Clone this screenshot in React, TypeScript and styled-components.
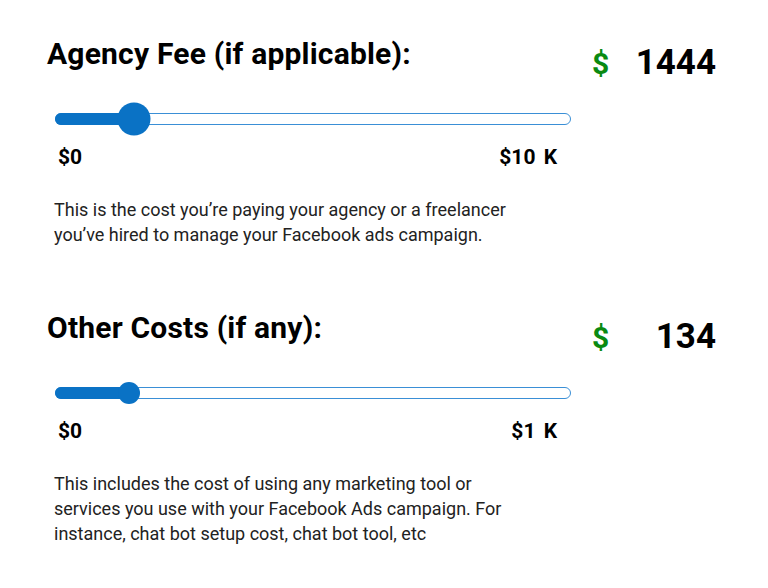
import React from "react";
import styled, { createGlobalStyle } from "styled-components";

const GlobalStyle = createGlobalStyle`
  html, body {
    margin: 0;
    padding: 0;
    background: #ffffff;
  }
  body {
    font-family: Roboto, "Liberation Sans", Arial, sans-serif;
    color: #000000;
  }
`;

const blue = "#0a72c5";

interface CostItem {
  title: string;
  value: number;
  max: number;
  maxLabel: string;
  bigThumb?: boolean;
  text: string;
}

const items: CostItem[] = [
  {
    title: "Agency Fee (if applicable):",
    value: 1444,
    max: 10000,
    maxLabel: "$10 K",
    bigThumb: true,
    text: "This is the cost you’re paying your agency or a freelancer you’ve hired to manage your Facebook ads campaign.",
  },
  {
    title: "Other Costs (if any):",
    value: 134,
    max: 1000,
    maxLabel: "$1 K",
    text: "This includes the cost of using any marketing tool or services you use with your Facebook Ads campaign. For instance, chat bot setup cost, chat bot tool, etc",
  },
];

const Slider = ({ value, max, big }: { value: number; max: number; big?: boolean }) => {
  const pct = value / max;
  // thumb centre travels between 6px insets of the track
  const pos = `calc(6px + ${pct} * (100% - 12px))`;
  return (
    <SliderWrap>
      <Track>
        <Fill style={{ width: pos }} />
        <Thumb big={big} style={{ left: pos }} />
      </Track>
    </SliderWrap>
  );
};

export default function App() {
  return (
    <>
      <GlobalStyle />
      <Page>
        {items.map((item) => (
          <Section key={item.title}>
            <Main>
              <Title>{item.title}</Title>
              <Slider value={item.value} max={item.max} big={item.bigThumb} />
              <Range>
                <span>$0</span>
                <span>{item.maxLabel}</span>
              </Range>
              <Note>{item.text}</Note>
            </Main>
            <Amount>
              <Dollar>$</Dollar>
              <span>{item.value}</span>
            </Amount>
          </Section>
        ))}
      </Page>
    </>
  );
}

const Page = styled.div`
  width: 768px;
  height: 588px;
  box-sizing: border-box;
  padding: 37px 0 0 47px;
  display: flex;
  flex-direction: column;
  gap: 64px;
`;

const Section = styled.section`
  display: flex;
  align-items: flex-start;
  gap: 21px;
`;

const Main = styled.div`
  width: 524px;
  display: flex;
  flex-direction: column;
`;

const Title = styled.h2`
  margin: 0;
  font-size: 30px;
  line-height: 34px;
  font-weight: 700;
  letter-spacing: 0.2px;
  color: #000;
`;

const SliderWrap = styled.div`
  margin: 31px 0 0 8px;
  height: 34px;
  display: flex;
  align-items: center;
`;

const Track = styled.div`
  position: relative;
  flex: 1;
  height: 12px;
  box-sizing: border-box;
  border: 1.5px solid #3a8fd6;
  border-radius: 6px;
  background: #fff;
`;

const Fill = styled.div`
  position: absolute;
  left: -1.5px;
  top: -1.5px;
  height: 12px;
  border-radius: 6px;
  background: ${blue};
`;

const Thumb = styled.div<{ big?: boolean }>`
  position: absolute;
  top: 50%;
  width: ${({ big }) => (big ? 33 : 22)}px;
  height: ${({ big }) => (big ? 33 : 22)}px;
  border-radius: 50%;
  background: ${blue};
  transform: translate(-50%, -50%);
`;

const Range = styled.div`
  margin: 9px 14px 0 11px;
  display: flex;
  justify-content: space-between;
  font-size: 21px;
  line-height: 24px;
  font-weight: 700;
  word-spacing: 3px;
`;

const Note = styled.p`
  margin: 28px 0 0 7px;
  width: 465px;
  font-size: 18px;
  line-height: 25px;
  color: #222;
`;

const Amount = styled.div`
  margin-top: 6px;
  width: 124px;
  display: flex;
  justify-content: space-between;
  align-items: baseline;
  font-size: 35px;
  line-height: 40px;
  font-weight: 700;
`;

const Dollar = styled.span`
  color: #0a8a12;
  font-weight: 700;
  font-size: 30px;
`;
